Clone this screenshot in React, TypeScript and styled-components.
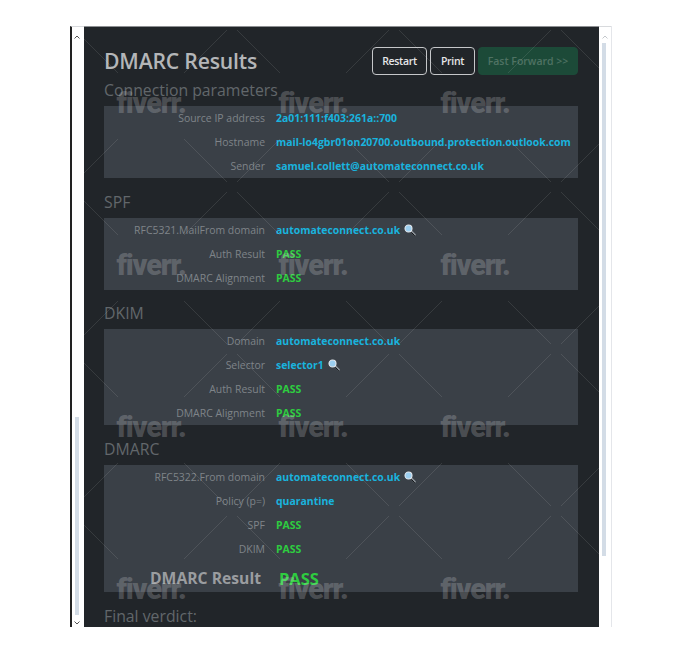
import React from "react";
import styled, { createGlobalStyle } from "styled-components";

const GlobalStyle = createGlobalStyle`
  html, body {
    margin: 0;
    padding: 0;
    background: #fff;
  }
  body {
    font-family: "Open Sans", "Noto Sans", sans-serif;
  }
`;

const Page = styled.div`
  width: 680px;
  height: 656px;
  padding: 26px 0 0 70px;
  box-sizing: border-box;
  overflow: hidden;
`;

const Frame = styled.div`
  display: flex;
  width: 542px;
  height: 601px;
  border-right: 1px solid #e4e6ea;
  box-sizing: border-box;
`;

const ScrollBar = styled.div<{ $left?: boolean }>`
  position: relative;
  flex: none;
  width: ${(p) => (p.$left ? "14px" : "12px")};
  border-left: ${(p) => (p.$left ? "2px solid #222" : "none")};
  border-top: 1px solid #d8dadd;
  box-sizing: border-box;
  background: #fff;
`;

const Thumb = styled.div<{ $top: number; $height: number; $x: number }>`
  position: absolute;
  left: ${(p) => p.$x}px;
  top: ${(p) => p.$top}px;
  width: 4px;
  height: ${(p) => p.$height}px;
  background: #d3dce6;
`;

const Arrow = styled.svg<{ $x: number; $top?: number; $bottom?: number }>`
  position: absolute;
  left: ${(p) => p.$x}px;
  ${(p) => (p.$top !== undefined ? `top: ${p.$top}px;` : `bottom: ${p.$bottom}px;`)}
  width: 6px;
  height: 4px;
`;

const Panel = styled.div`
  position: relative;
  flex: 1;
  min-width: 0;
  overflow: hidden;
  background: #212529;
  border-top: 1px solid #8d8f92;
  padding: 20px 21px 0 20px;
  box-sizing: border-box;
  color: #7f8489;
`;

const Header = styled.div`
  display: flex;
  align-items: center;
  justify-content: space-between;
  height: 28px;
  margin-bottom: -9px;
`;

const Title = styled.h1`
  margin: 0 0 2px;
  font-size: 21.2px;
  font-weight: 600;
  color: #b4b6b8;
  letter-spacing: -0.2px;
`;

const Actions = styled.div`
  display: flex;
  gap: 3px;
  align-items: flex-start;
`;

const Button = styled.button<{ $width: number; $disabled?: boolean }>`
  height: 28px;
  width: ${(p) => p.$width}px;
  padding: 0;
  font-family: inherit;
  font-size: 10.5px;
  font-weight: 600;
  color: ${(p) => (p.$disabled ? "#4f7263" : "#e6e7e8")};
  background: ${(p) => (p.$disabled ? "#1c4a38" : "#212529")};
  border: 1px solid ${(p) => (p.$disabled ? "#1c4a38" : "#c5c7c9")};
  border-radius: 4px;
  letter-spacing: ${(p) => (p.$disabled ? "0" : "-0.3px")};
`;

const Section = styled.section<{ $gap: number }>`
  margin-top: ${(p) => p.$gap}px;
`;

const SectionTitle = styled.h2`
  margin: 0 0 4px;
  font-size: 15.8px;
  line-height: 24px;
  font-weight: 500;
  color: #62676b;
`;

const Card = styled.div`
  background: #3a4047;
`;

const Row = styled.div<{ $big?: boolean }>`
  display: grid;
  grid-template-columns: 161px 1fr;
  column-gap: ${(p) => (p.$big ? "18px" : "11px")};
  align-items: center;
  box-sizing: border-box;
  height: ${(p) => (p.$big ? "31px" : "24px")};
  padding: ${(p) => (p.$big ? "3px 0 0" : "0 0 1px")};
  font-size: ${(p) => (p.$big ? "15.7px" : "10.45px")};
  margin-left: ${(p) => (p.$big ? "-4px" : "0")};
`;

const Label = styled.div<{ $big?: boolean }>`
  text-align: right;
  white-space: nowrap;
  font-weight: ${(p) => (p.$big ? 700 : 400)};
  color: ${(p) => (p.$big ? "#9a9da0" : "#7f8489")};
`;

const Value = styled.div<{ $pass?: boolean; $big?: boolean }>`
  display: flex;
  align-items: center;
  gap: 4px;
  white-space: nowrap;
  font-size: ${(p) => (p.$big ? "16.5px" : "inherit")};
  font-weight: 700;
  color: ${(p) => (p.$pass ? "#2ecc40" : "#19b3de")};
`;

const Watermark = styled.div`
  position: absolute;
  top: -5px;
  left: -14px;
  display: grid;
  grid-template-columns: repeat(3, 162px);
  grid-auto-rows: 162px;
  pointer-events: none;
`;

const Mark = styled.div`
  display: flex;
  align-items: center;
  justify-content: center;
  font-family: Roboto, "Open Sans", sans-serif;
  font-size: 29px;
  font-weight: 900;
  letter-spacing: -1.2px;
  color: rgba(255, 255, 255, 0.2);
`;

const Lines = styled.svg`
  position: absolute;
  top: 0;
  left: 0;
  pointer-events: none;
`;

const Lens = () => (
  <svg width="12" height="12" viewBox="0 0 12 12">
    <path d="M6.800 6.800l4 4" stroke="#8b9197" strokeWidth="2" strokeLinecap="round" />
    <path d="M7.500 8.500l3 3" stroke="#14171a" strokeWidth="1" strokeLinecap="round" />
    <circle cx="4.500" cy="4.500" r="3.500" fill="#9ccff0" stroke="#e4e9ef" strokeWidth="1.100" />
  </svg>
);

const crossX = [-14, 148, 310, 472];
const crossY = [-2, 160, 322, 484];

const Crosses = () => (
  <Lines width="515" height="600">
    {crossX.map((x) =>
      crossY.map((y) => (
        <path
          key={x + "-" + y}
          d={`M${x - 48} ${y - 48}l43 43M${x + 5} ${y + 5}l43 43M${x + 48} ${y - 48}l-43 43M${x - 5} ${y + 5}l-43 43`}
          stroke="rgba(255,255,255,0.1)"
          strokeWidth="1"
          fill="none"
        />
      ))
    )}
  </Lines>
);

type Item = { label: string; value: string; pass?: boolean; lens?: boolean };

const sections: { title: string; gap: number; rows: Item[] }[] = [
  {
    title: "Connection parameters",
    gap: 12,
    rows: [
      { label: "Source IP address", value: "2a01:111:f403:261a::700" },
      { label: "Hostname", value: "mail-lo4gbr01on20700.outbound.protection.outlook.com" },
      { label: "Sender", value: "samuel.collett@automateconnect.co.uk" },
    ],
  },
  {
    title: "SPF",
    gap: 12,
    rows: [
      { label: "RFC5321.MailFrom domain", value: "automateconnect.co.uk", lens: true },
      { label: "Auth Result", value: "PASS", pass: true },
      { label: "DMARC Alignment", value: "PASS", pass: true },
    ],
  },
  {
    title: "DKIM",
    gap: 11,
    rows: [
      { label: "Domain", value: "automateconnect.co.uk" },
      { label: "Selector", value: "selector1", lens: true },
      { label: "Auth Result", value: "PASS", pass: true },
      { label: "DMARC Alignment", value: "PASS", pass: true },
    ],
  },
];

const dmarcRows: Item[] = [
  { label: "RFC5322.From domain", value: "automateconnect.co.uk", lens: true },
  { label: "Policy (p=)", value: "quarantine" },
  { label: "SPF", value: "PASS", pass: true },
  { label: "DKIM", value: "PASS", pass: true },
];

const ResultRow = ({ item }: { item: Item }) => (
  <Row>
    <Label>{item.label}</Label>
    <Value $pass={item.pass}>
      {item.value}
      {item.lens ? <Lens /> : null}
    </Value>
  </Row>
);

const App = () => {
  return (
    <Page>
      <GlobalStyle />
      <Frame>
        <ScrollBar $left>
          <Arrow $x={2} $top={8} viewBox="0 0 6 4">
            <path d="M.5 3.500L3 1l2.500 2.500" stroke="#555" fill="none" />
          </Arrow>
          <Thumb $x={3} $top={390} $height={198} />
          <Arrow $x={2} $bottom={2} viewBox="0 0 6 4">
            <path d="M.5 .5L3 3l2.500-2.500" stroke="#555" fill="none" />
          </Arrow>
        </ScrollBar>
        <Panel>
          <Header>
            <Title>DMARC Results</Title>
            <Actions>
              <Button $width={55}>Restart</Button>
              <Button $width={45}>Print</Button>
              <Button $width={100} $disabled>
                Fast Forward &gt;&gt;
              </Button>
            </Actions>
          </Header>
          {sections.map((s) => (
            <Section key={s.title} $gap={s.gap}>
              <SectionTitle>{s.title}</SectionTitle>
              <Card>
                {s.rows.map((r) => (
                  <ResultRow key={r.label} item={r} />
                ))}
              </Card>
            </Section>
          ))}
          <Section $gap={12}>
            <SectionTitle>DMARC</SectionTitle>
            <Card>
              {dmarcRows.map((r) => (
                <ResultRow key={r.label} item={r} />
              ))}
              <Row $big>
                <Label $big>DMARC Result</Label>
                <Value $pass $big>
                  PASS
                </Value>
              </Row>
            </Card>
          </Section>
          <Section $gap={12}>
            <SectionTitle>Final verdict:</SectionTitle>
          </Section>
          <Crosses />
          <Watermark>
            {Array.from({ length: 12 }).map((_, i) => (
              <Mark key={i}>fiverr.</Mark>
            ))}
          </Watermark>
        </Panel>
        <ScrollBar>
          <Arrow $x={3} $top={8} viewBox="0 0 6 4">
            <path d="M.5 3.500L3 1l2.500 2.500" stroke="#c4c8cc" fill="none" />
          </Arrow>
          <Thumb $x={3} $top={16} $height={513} />
        </ScrollBar>
      </Frame>
    </Page>
  );
};

export default App;
